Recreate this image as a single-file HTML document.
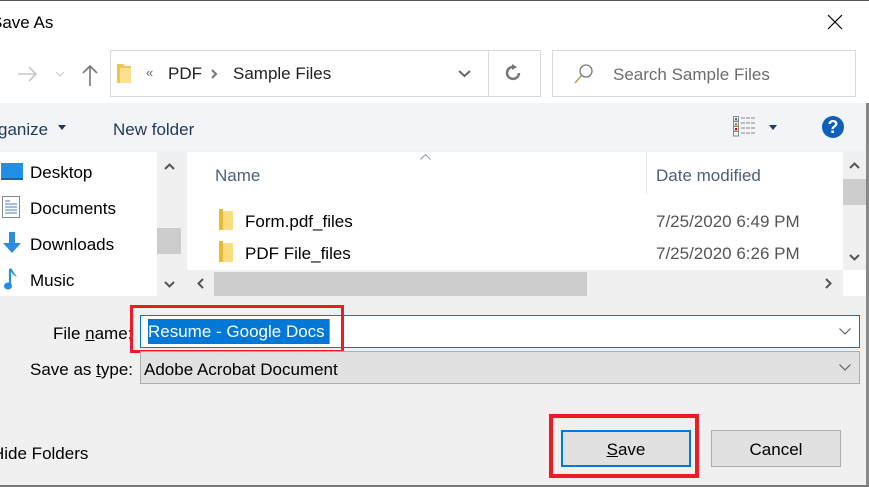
<!DOCTYPE html>
<html><head><meta charset="utf-8"><style>
*{margin:0;padding:0;box-sizing:border-box}
body{width:869px;height:487px;overflow:hidden;position:relative;background:#f0f0f0;font-family:"Liberation Sans",sans-serif;font-size:17px;color:#000}
.a{position:absolute;white-space:nowrap}
svg{position:absolute;overflow:visible}
</style></head><body>
<div class="a" style="left:0;top:0;width:869px;height:103px;background:#fff"></div>
<div class="a" style="left:0;top:0;width:869px;height:1px;background:#555"></div>
<div class="a" style="left:-9px;top:13px;font-size:17px">Save As</div>
<svg style="left:828px;top:15px" width="14" height="14"><path d="M0 0L14 14M14 0L0 14" stroke="#000" stroke-width="1.2"/></svg>
<!-- nav -->
<svg style="left:17px;top:66px" width="20" height="16"><path d="M1 8H19M12 1L19 8L12 15" stroke="#c8c8c8" stroke-width="1.6" fill="none"/></svg>
<svg style="left:56px;top:72px" width="8" height="5"><path d="M0 0L4 4L8 0" stroke="#c8c8c8" fill="none"/></svg>
<svg style="left:82px;top:64px" width="16" height="22"><path d="M8 22V2M1 9L8 2L15 9" stroke="#777" stroke-width="1.6" fill="none"/></svg>
<!-- address -->
<div class="a" style="left:110px;top:50px;width:431px;height:47px;border:1px solid #d9d9d9;background:#fff"></div>
<div class="a" style="left:488px;top:51px;width:1px;height:45px;background:#d9d9d9"></div>
<svg style="left:117px;top:63px" width="15" height="20"><path d="M0 1H6L8 3H14V20H0Z" fill="#f1c64f"/><path d="M3 5H14V20H3Z" fill="#fbe08d"/></svg>
<div class="a" style="left:146px;top:65px;font-size:13px;color:#666">«</div>
<div class="a" style="left:168px;top:64px;color:#222">PDF</div>
<svg style="left:211px;top:69px" width="7" height="10"><path d="M1 1L5 5L1 9" stroke="#777" stroke-width="2" fill="none"/></svg>
<div class="a" style="left:233px;top:64px;color:#222">Sample Files</div>
<svg style="left:458px;top:70px" width="13" height="8"><path d="M1 1L6.5 6L12 1" stroke="#666" stroke-width="2" fill="none"/></svg>
<svg style="left:505px;top:64px" width="18" height="18"><path d="M14 9A6 6 0 1 1 9 3" stroke="#777" stroke-width="2.5" fill="none"/><path d="M7 0L12 3L7 6Z" fill="#777"/></svg>
<div class="a" style="left:552px;top:50px;width:304px;height:47px;border:1px solid #d9d9d9;background:#fff"></div>
<svg style="left:574px;top:64px" width="20" height="20"><circle cx="12" cy="7" r="6" stroke="#777" stroke-width="1.3" fill="none"/><path d="M7.5 11.5L1 19" stroke="#c79a4a" stroke-width="1.5"/></svg>
<div class="a" style="left:613px;top:65px;color:#6d6d6d">Search Sample Files</div>
<!-- toolbar -->
<div class="a" style="left:0;top:103px;width:866px;height:47px;background:#f3f4f7"></div>
<div class="a" style="left:-2px;top:120px;color:#1e395b">ganize</div>
<svg style="left:58px;top:125px" width="8" height="5"><path d="M0 0H8L4 5Z" fill="#1e395b"/></svg>
<div class="a" style="left:113px;top:120px;color:#1e395b">New folder</div>
<svg style="left:733px;top:116px" width="22" height="21"><g fill="none" stroke="#888"><rect x="0.5" y="0.5" width="5" height="4.5"/><rect x="0.5" y="5.5" width="5" height="4.5"/><rect x="0.5" y="10.5" width="5" height="4.5"/><rect x="0.5" y="15.5" width="5" height="4.5"/></g><path d="M8 2H22M8 7H22M8 12H22M8 17H22" stroke="#888" stroke-dasharray="4 1"/><rect x="2" y="12" width="2" height="2" fill="#c00"/><rect x="2" y="7" width="2" height="2" fill="#b8860b"/><rect x="2" y="2" width="2" height="2" fill="#36c"/></svg>
<svg style="left:769px;top:125px" width="8" height="5"><path d="M0 0H8L4 5Z" fill="#1e395b"/></svg>
<div class="a" style="left:822px;top:116px;width:22px;height:22px;border-radius:50%;background:#0d5fb8;color:#fff;font-weight:bold;font-size:18px;text-align:center;line-height:22px">?</div>
<div class="a" style="left:866px;top:103px;width:3px;height:384px;background:#888"></div>
<!-- panes -->
<div class="a" style="left:0;top:152px;width:157px;height:144px;background:#fff"></div>
<div class="a" style="left:157px;top:152px;width:24px;height:144px;background:#f0f0f0"></div>
<div class="a" style="left:157px;top:228px;width:24px;height:26px;background:#cdcdcd"></div>
<svg style="left:164px;top:163px" width="11" height="7"><path d="M1 6L5.5 1.5L10 6" stroke="#555" stroke-width="2" fill="none"/></svg>
<svg style="left:164px;top:281px" width="11" height="7"><path d="M1 1L5.5 5.5L10 1" stroke="#555" stroke-width="2" fill="none"/></svg>
<div class="a" style="left:1px;top:163px;width:22px;height:17px;background:#1e90e8;border-bottom:2px solid #1565b0"></div>
<div class="a" style="left:30px;top:163px">Desktop</div>
<svg style="left:2px;top:196px" width="18" height="22"><rect x="0.5" y="0.5" width="17" height="21" fill="#fff" stroke="#888"/><path d="M3 5H8M3 8H15M3 11H15M3 14H15M3 17H15" stroke="#4a7fb8"/></svg>
<div class="a" style="left:30px;top:199px">Documents</div>
<svg style="left:3px;top:232px" width="18" height="22"><path d="M6 0H12V11H18L9 21L0 11H6Z" fill="#2d8be0"/></svg>
<div class="a" style="left:30px;top:235px">Downloads</div>
<svg style="left:4px;top:267px" width="14" height="24"><path d="M6 2V18" stroke="#1e90e8" stroke-width="2.2"/><ellipse cx="4" cy="19" rx="4" ry="3.5" fill="#1e90e8"/><path d="M6 2Q8 8 13 10Q10 6 7 1Z" fill="#1e90e8"/></svg>
<div class="a" style="left:30px;top:271px">Music</div>
<div class="a" style="left:187px;top:152px;width:656px;height:118px;background:#fff"></div>
<svg style="left:420px;top:154px" width="11" height="6"><path d="M0.5 5.5L5.5 0.5L10.5 5.5" stroke="#999" fill="none"/></svg>
<div class="a" style="left:215px;top:166px;color:#4c607a">Name</div>
<div class="a" style="left:646px;top:152px;width:1px;height:42px;background:#e5e5e5"></div>
<div class="a" style="left:656px;top:166px;color:#4c607a">Date modified</div>
<svg style="left:219px;top:209px" width="15" height="21"><path d="M0 0H4V21H0Z" fill="#e9b93a"/><path d="M4 2H14V21H4Z" fill="#fcdc7b"/></svg>
<div class="a" style="left:245px;top:212px">Form.pdf_files</div>
<div class="a" style="left:656px;top:212px;color:#555">7/25/2020 6:49 PM</div>
<svg style="left:219px;top:241px" width="15" height="21"><path d="M0 0H4V21H0Z" fill="#e9b93a"/><path d="M4 2H14V21H4Z" fill="#fcdc7b"/></svg>
<div class="a" style="left:245px;top:244px">PDF File_files</div>
<div class="a" style="left:656px;top:244px;color:#555">7/25/2020 6:26 PM</div>
<div class="a" style="left:843px;top:152px;width:23px;height:118px;background:#f0f0f0"></div>
<div class="a" style="left:843px;top:179px;width:23px;height:26px;background:#cdcdcd"></div>
<svg style="left:849px;top:162px" width="11" height="7"><path d="M1 6L5.5 1.5L10 6" stroke="#555" stroke-width="2" fill="none"/></svg>
<svg style="left:849px;top:254px" width="11" height="7"><path d="M1 1L5.5 5.5L10 1" stroke="#555" stroke-width="2" fill="none"/></svg>
<div class="a" style="left:188px;top:270px;width:655px;height:26px;background:#f0f0f0"></div>
<div class="a" style="left:843px;top:270px;width:23px;height:26px;background:#fff"></div>
<div class="a" style="left:214px;top:272px;width:373px;height:24px;background:#cdcdcd"></div>
<svg style="left:197px;top:278px" width="7" height="11"><path d="M6 1L1.5 5.5L6 10" stroke="#555" stroke-width="2" fill="none"/></svg>
<svg style="left:825px;top:278px" width="7" height="11"><path d="M1 1L5.5 5.5L1 10" stroke="#555" stroke-width="2" fill="none"/></svg>
<!-- bottom -->
<div class="a" style="left:53px;top:324px">File <u>n</u>ame:</div>
<div class="a" style="left:140px;top:315px;width:720px;height:33px;border:1px solid #0078d7;background:#fff"></div>
<div class="a" style="left:148px;top:319px;width:182px;height:25px;background:#0078d7;color:#fff;line-height:26px">Resume - Google Docs</div>
<div class="a" style="left:329px;top:319px;width:1px;height:25px;background:#e88a2a"></div>
<svg style="left:839px;top:328px" width="12" height="7"><path d="M0.5 0.5L6 6L11.5 0.5" stroke="#555" fill="none"/></svg>
<div class="a" style="left:130px;top:305px;width:214px;height:48px;border:3px solid #ed1c24"></div>
<div class="a" style="left:30px;top:360px">Save as <u>t</u>ype:</div>
<div class="a" style="left:140px;top:351px;width:720px;height:33px;border:1px solid #adadad;background:#e1e1e1"></div>
<div class="a" style="left:144px;top:360px">Adobe Acrobat Document</div>
<svg style="left:839px;top:364px" width="12" height="7"><path d="M0.5 0.5L6 6L11.5 0.5" stroke="#555" fill="none"/></svg>
<div class="a" style="left:-8px;top:444px">Hide Folders</div>
<div class="a" style="left:561px;top:430px;width:130px;height:37px;border:2px solid #0078d7;background:#e1e1e1;text-align:center;line-height:35px"><u>S</u>ave</div>
<div class="a" style="left:549px;top:414px;width:150px;height:64px;border:4px solid #ed1c24"></div>
<div class="a" style="left:711px;top:430px;width:130px;height:37px;border:1px solid #adadad;background:#e1e1e1;text-align:center;line-height:37px">Cancel</div>
<div class="a" style="left:0;top:485px;width:869px;height:2px;background:#777"></div>
</body></html>
